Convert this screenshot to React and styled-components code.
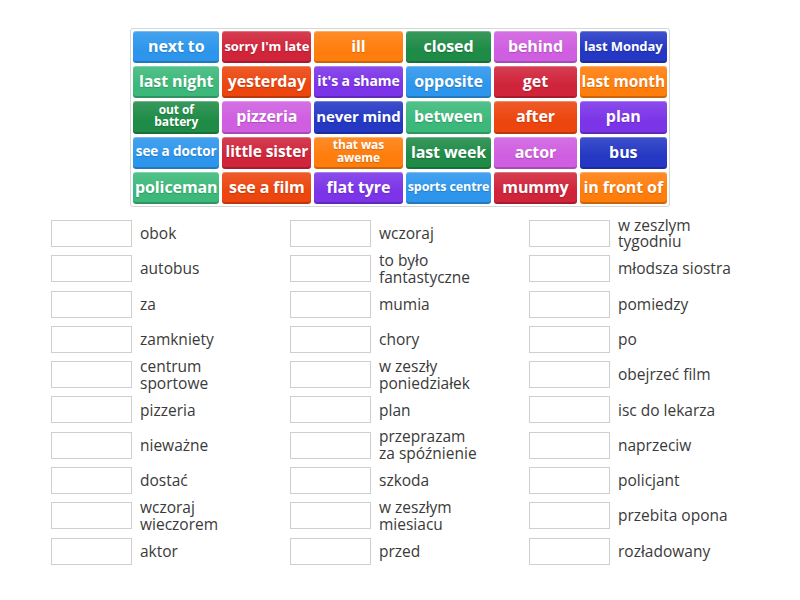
import styled, { createGlobalStyle } from "styled-components";

const GlobalStyle = createGlobalStyle`
  * { box-sizing: border-box; }
  body {
    margin: 0;
    background: #ffffff;
    font-family: "Open Sans", "Liberation Sans", sans-serif;
  }
`;

const colors = {
  blue: "#2d96ec",
  crimson: "#d0243a",
  orange: "#ff7d0c",
  green: "#1e8b46",
  pink: "#cf5ee0",
  navy: "#2438c4",
  teal: "#3cb97a",
  flame: "#ec450e",
  purple: "#7b34e8",
};

const tiles = [
  ["next to", "blue", 16],
  ["sorry I'm late", "crimson", 13],
  ["ill", "orange", 16],
  ["closed", "green", 16],
  ["behind", "pink", 16],
  ["last Monday", "navy", 13],
  ["last night", "teal", 16],
  ["yesterday", "flame", 16],
  ["it's a shame", "purple", 14],
  ["opposite", "blue", 16],
  ["get", "crimson", 16],
  ["last month", "orange", 15.5],
  ["out of battery", "green", 12, true],
  ["pizzeria", "pink", 16],
  ["never mind", "navy", 15],
  ["between", "teal", 16],
  ["after", "flame", 16],
  ["plan", "purple", 16],
  ["see a doctor", "blue", 13.5],
  ["little sister", "crimson", 15.5],
  ["that was aweme", "orange", 12, true],
  ["last week", "green", 16],
  ["actor", "pink", 16],
  ["bus", "navy", 16],
  ["policeman", "teal", 16],
  ["see a film", "flame", 16],
  ["flat tyre", "purple", 16],
  ["sports centre", "blue", 12.5],
  ["mummy", "crimson", 16],
  ["in front of", "orange", 16],
];

const columns = [
  ["obok", "autobus", "za", "zamkniety", "centrum sportowe", "pizzeria", "nieważne", "dostać", "wczoraj wieczorem", "aktor"],
  ["wczoraj", "to było fantastyczne", "mumia", "chory", "w zeszły poniedziałek", "plan", "przeprazam za spóźnienie", "szkoda", "w zeszłym miesiacu", "przed"],
  ["w zeszlym tygodniu", "młodsza siostra", "pomiedzy", "po", "obejrzeć film", "isc do lekarza", "naprzeciw", "policjant", "przebita opona", "rozładowany"],
];

export default function App() {
  return (
    <Page>
      <GlobalStyle />
      <TileBoard>
        {tiles.map(([label, tone, size, wrap]) => (
          <Tile key={label} $color={colors[tone]} $size={size} $wrap={wrap}>
            {label}
          </Tile>
        ))}
      </TileBoard>
      <Answers>
        {columns.map((items, i) => (
          <AnswerColumn key={i}>
            {items.map((text) => (
              <AnswerRow key={text}>
                <DropBox />
                <Label>{text}</Label>
              </AnswerRow>
            ))}
          </AnswerColumn>
        ))}
      </Answers>
    </Page>
  );
}

const Page = styled.main`
  width: 800px;
  height: 600px;
  padding-top: 28px;
  display: flex;
  flex-direction: column;
  align-items: center;
`;

const TileBoard = styled.section`
  width: 540px;
  padding: 2px;
  border: 1px solid #d6d6d6;
  border-radius: 3px;
  background: #ffffff;
  display: grid;
  grid-template-columns: repeat(6, 1fr);
  grid-auto-rows: 32.2px;
  gap: 3px 3px;
`;

const Tile = styled.div`
  display: flex;
  align-items: center;
  justify-content: center;
  text-align: center;
  padding: 0 2px 2px;
  border-radius: 3px;
  background: linear-gradient(
    to bottom,
    rgba(255, 255, 255, 0.12),
    rgba(255, 255, 255, 0) 60%
  ),
    ${(p) => p.$color};
  box-shadow: inset 0 1px 0 rgba(255, 255, 255, 0.28),
    inset 0 -2px 0 rgba(0, 0, 0, 0.2);
  color: #ffffff;
  font-family: "Open Sans", "Liberation Sans", sans-serif;
  font-weight: 700;
  font-size: ${(p) => p.$size}px;
  line-height: ${(p) => (p.$wrap ? "1.05" : "1")};
  white-space: ${(p) => (p.$wrap ? "normal" : "nowrap")};
  ${(p) => (p.$wrap ? "padding-left: 14px; padding-right: 14px;" : "")}
  text-shadow: 0 1px 1px rgba(0, 0, 0, 0.18);
  letter-spacing: -0.1px;
`;

const Answers = styled.section`
  align-self: flex-start;
  margin-top: 13px;
  padding-left: 51px;
  display: grid;
  grid-template-columns: repeat(3, 239px);
`;

const AnswerColumn = styled.div`
  display: flex;
  flex-direction: column;
  gap: 8.3px;
`;

const AnswerRow = styled.div`
  display: flex;
  align-items: center;
  gap: 8px;
  height: 27px;
`;

const DropBox = styled.div`
  flex: none;
  width: 81px;
  height: 27px;
  border: 1px solid #cfcfcf;
  background: #ffffff;
`;

const Label = styled.div`
  max-width: 120px;
  font-family: "Open Sans", "Liberation Sans", sans-serif;
  font-size: 15.5px;
  line-height: 16.8px;
  color: #3a3a3a;
  text-wrap: balance;
`;
